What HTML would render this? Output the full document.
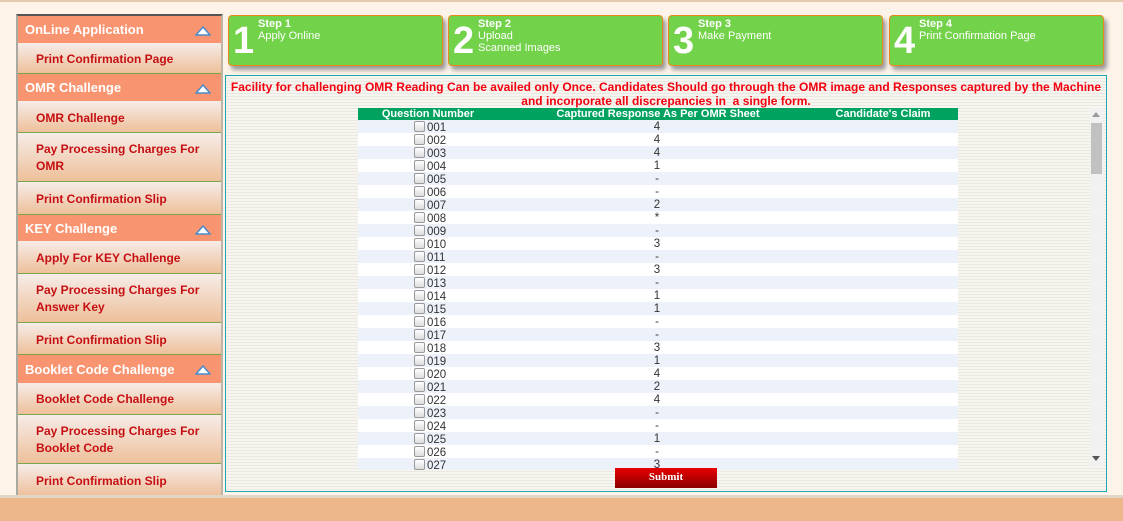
<!DOCTYPE html>
<html><head><meta charset="utf-8"><style>
*{margin:0;padding:0;box-sizing:border-box}
body{width:1123px;height:521px;background:#fdf3e8;font-family:"Liberation Sans",sans-serif;position:relative;overflow:hidden}
.topline{position:absolute;left:0;top:0;width:1123px;height:2px;background:#e6cbb0}
.footer{position:absolute;left:0;top:495px;width:1123px;height:26px;background:#edb78b;border-top:3px solid #e1d6c4}
.side{position:absolute;left:16px;top:14px;width:207px;height:482px;border-left:2px solid #a9a9a0;border-right:2px solid #bdb5a8;border-top:2px solid #555;background:#f0c9a8}
.h{position:absolute;left:0;width:203px;background:#f99470;color:#fff;font-weight:bold;font-size:13px;padding-left:7px}
.h svg{position:absolute;right:10px;top:10px}
.it{position:absolute;left:0;width:203px;background:linear-gradient(#f6ece8,#eec09a);color:#c60f12;font-weight:bold;font-size:12px;padding-left:18px;border-bottom:1px solid #7aa64a;line-height:17px}
.step{position:absolute;top:15px;width:215px;height:51px;background:#72d249;border:1px solid #e8871e;border-radius:4px;box-shadow:3px 4px 4px #999;color:#fff}
.step b.n{position:absolute;left:4px;top:3px;font-size:38px;font-weight:bold;line-height:44px}
.step .t{position:absolute;left:29px;top:2px;font-size:11px;line-height:12px}
.main{position:absolute;left:225px;top:75px;width:882px;height:417px;border:1px solid #20a6b0;background:repeating-linear-gradient(#f7f5f0 0 2px,#ebe8e2 2px 3px)}
.title{position:absolute;left:0;top:4px;width:880px;text-align:center;color:#f3000f;font-weight:bold;font-size:12px;line-height:14px}
.thd{position:absolute;left:132px;top:32px;width:600px;height:12px;background:#00a260;color:#fff;font-weight:bold;font-size:11px;line-height:12px}
.thd span{position:absolute;top:0;text-align:center}
.row{position:absolute;left:132px;width:600px;height:13px;font-size:11.5px;color:#333;line-height:13px}
.row i{position:absolute;left:56px;top:1px;width:11px;height:11px;border:1px solid #999;border-radius:2px;background:linear-gradient(#fff,#ddd)}
.row .q{position:absolute;left:69px;top:2px}
.row .v{position:absolute;left:294px;width:10px;text-align:center;top:1px}
.sb{position:absolute;left:864px;top:32px;width:13px;height:358px;background:#f1f1f1}
.btn{position:absolute;left:389px;top:392px;width:102px;height:20px;background:linear-gradient(#e80000,#8a0000);color:#fff;font-family:"Liberation Serif",serif;font-weight:bold;font-size:11px;text-align:center;line-height:19px}
</style></head><body>
<div class="topline"></div>
<div class="side">
<div class="h" style="top:0;height:27px;line-height:28px">OnLine Application<svg width="16" height="10"><path d="M1 9 L8 1 L15 9 Z" fill="#fff" stroke="#4a8bc8" stroke-width="1.5"/></svg></div>
<div class="it" style="top:27px;height:31px;padding-top:8px">Print Confirmation Page</div>
<div class="h" style="top:58px;height:27px;line-height:28px">OMR Challenge<svg width="16" height="10"><path d="M1 9 L8 1 L15 9 Z" fill="#fff" stroke="#4a8bc8" stroke-width="1.5"/></svg></div>
<div class="it" style="top:85px;height:32px;padding-top:9px">OMR Challenge</div>
<div class="it" style="top:117px;height:49px;padding-top:8px">Pay Processing Charges For<br>OMR</div>
<div class="it" style="top:166px;height:33px;padding-top:9px">Print Confirmation Slip</div>
<div class="h" style="top:199px;height:26px;line-height:28px">KEY Challenge<svg width="16" height="10"><path d="M1 9 L8 1 L15 9 Z" fill="#fff" stroke="#4a8bc8" stroke-width="1.5"/></svg></div>
<div class="it" style="top:225px;height:33px;padding-top:9px">Apply For KEY Challenge</div>
<div class="it" style="top:258px;height:49px;padding-top:8px">Pay Processing Charges For<br>Answer Key</div>
<div class="it" style="top:307px;height:32px;padding-top:9px">Print Confirmation Slip</div>
<div class="h" style="top:339px;height:28px;line-height:29px">Booklet Code Challenge<svg width="16" height="10"><path d="M1 9 L8 1 L15 9 Z" fill="#fff" stroke="#4a8bc8" stroke-width="1.5"/></svg></div>
<div class="it" style="top:367px;height:32px;padding-top:8px">Booklet Code Challenge</div>
<div class="it" style="top:399px;height:49px;padding-top:8px">Pay Processing Charges For<br>Booklet Code</div>
<div class="it" style="top:448px;height:32px;padding-top:9px;border-bottom:none">Print Confirmation Slip</div>
</div>
<div class="step" style="left:228px"><b class="n">1</b><div class="t"><b>Step 1</b><br>Apply Online</div></div>
<div class="step" style="left:448px"><b class="n">2</b><div class="t"><b>Step 2</b><br>Upload<br>Scanned Images</div></div>
<div class="step" style="left:668px"><b class="n">3</b><div class="t"><b>Step 3</b><br>Make Payment</div></div>
<div class="step" style="left:889px"><b class="n">4</b><div class="t"><b>Step 4</b><br>Print Confirmation Page</div></div>
<div class="main">
<div class="title">Facility for challenging OMR Reading Can be availed only Once. Candidates Should go through the OMR image and Responses captured by the Machine<br>and incorporate all discrepancies in &nbsp;a single form.</div>
<div class="thd"><span style="left:0;width:140px">Question Number</span><span style="left:190px;width:220px">Captured Response As Per OMR Sheet</span><span style="left:450px;width:150px">Candidate's Claim</span></div>
<div id="rows"></div>
<div class="sb"><div style="position:absolute;left:2px;top:4px;width:0;height:0;border-left:4.5px solid transparent;border-right:4.5px solid transparent;border-bottom:5px solid #999"></div><div style="position:absolute;left:1px;top:15px;width:11px;height:51px;background:#c1c1c1"></div><div style="position:absolute;left:2px;top:348px;width:0;height:0;border-left:4.5px solid transparent;border-right:4.5px solid transparent;border-top:5px solid #555"></div></div>
<div class="btn">Submit</div>
</div>
<div class="footer"></div>
<script>
var v="4 4 4 1 - - 2 * - 3 - 3 - 1 1 - - 3 1 4 2 4 - - 1 - 3".split(" ");
var h="";
for(var i=0;i<27;i++){var q=("00"+(i+1)).slice(-3);
h+='<div class="row" style="top:'+(44+i*13)+'px;height:'+(i==26?12:13)+'px;overflow:hidden;background:'+(i%2==0?'#edf1fa':'#fff')+'"><i></i><span class="q">'+q+'</span><span class="v">'+v[i]+'</span></div>';}
document.getElementById("rows").innerHTML=h;
</script>
</body></html>
